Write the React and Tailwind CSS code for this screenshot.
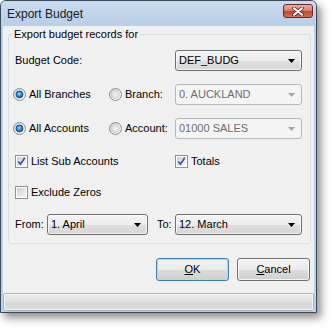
import React from "react";

function Radio({ checked, id }) {
  return (
    <svg width="13" height="13" viewBox="0 0 13 13" className="shrink-0">
      <defs>
        <linearGradient id={`ro${id}`} x1="0" y1="0" x2="1" y2="1">
          <stop offset="0" stopColor="#c9c9c9" />
          <stop offset="1" stopColor="#ffffff" />
        </linearGradient>
        <radialGradient id={`ri${id}`} cx="0.5" cy="0.5" r="0.55">
          <stop offset="0" stopColor="#f7f7f7" />
          <stop offset="1" stopColor="#cdcdcd" />
        </radialGradient>
        <radialGradient id={`rd${id}`} cx="0.45" cy="0.4" r="0.6">
          <stop offset="0" stopColor="#8fe0ff" />
          <stop offset="0.55" stopColor="#2d8fd6" />
          <stop offset="1" stopColor="#0e4c86" />
        </radialGradient>
      </defs>
      <circle cx="6.5" cy="6.5" r="6" fill={`url(#ro${id})`} stroke="#8b8f92" strokeWidth="1" />
      {checked ? (
        <circle cx="6.5" cy="6.5" r="3.4" fill={`url(#rd${id})`} stroke="#1b4a78" strokeWidth="0.9" />
      ) : (
        <circle cx="6.5" cy="6.5" r="4.3" fill={`url(#ri${id})`} />
      )}
    </svg>
  );
}

function Check({ checked, id }) {
  return (
    <svg width="13" height="13" viewBox="0 0 13 13" className="shrink-0">
      <defs>
        <linearGradient id={`cb${id}`} x1="0" y1="0" x2="1" y2="1">
          <stop offset="0" stopColor="#cfcfcf" />
          <stop offset="1" stopColor="#f7f7f7" />
        </linearGradient>
      </defs>
      <rect x="0.5" y="0.5" width="12" height="12" fill="#ffffff" stroke="#8e8f8f" />
      <rect x="2" y="2" width="9" height="9" fill={`url(#cb${id})`} />
      {checked && (
        <path d="M3.2 6.4 L5.4 9.3 L9.8 2.8" fill="none" stroke="#3b5aa0" strokeWidth="1.7" strokeLinejoin="round" />
      )}
    </svg>
  );
}

function Combo({ text, w, disabled }) {
  return (
    <div
      className={`h-[21px] ${w} shrink-0 rounded-[3px] border flex items-center pl-[3px] pr-[6px] ${
        disabled
          ? "border-[#b5b8ba] bg-[#f4f4f4] text-[#6d6d6d]"
          : "border-[#707070] bg-[linear-gradient(#f4f4f4_0%,#ececec_50%,#e0e0e0_51%,#d5d5d5_100%)] text-black shadow-[inset_0_0_0_1px_rgba(255,255,255,0.7)]"
      }`}
    >
      <span className="flex-1 whitespace-nowrap overflow-hidden">{text}</span>
      <svg width="7" height="4" viewBox="0 0 7 4">
        <path d="M0 0H7L3.5 4Z" fill={disabled ? "#a6a6a6" : "#000000"} />
      </svg>
    </div>
  );
}

function Button({ children, def }) {
  return (
    <div
      className={`w-[73px] h-[23px] rounded-[3px] border flex items-center justify-center text-black bg-[linear-gradient(#f2f2f2_0%,#ebebeb_50%,#dddddd_51%,#cfcfcf_100%)] ${
        def
          ? "border-[#3c7fb1] shadow-[inset_0_0_0_1px_#a9dcf6]"
          : "border-[#707070] shadow-[inset_0_0_0_1px_rgba(255,255,255,0.75)]"
      }`}
    >
      {children}
    </div>
  );
}

export default function App() {
  return (
    <div className="w-[333px] h-[328px] bg-white font-['Liberation_Sans',Arial,sans-serif] text-[11px] leading-[13px] text-black">
      <div className="w-[317px] h-[313px] flex flex-col rounded-t-[6px] border border-[#3b4a5a] bg-[#bad0e8] shadow-[4px_5px_9px_rgba(0,0,0,0.45)]">
        {/* title bar */}
        <div className="h-[25px] shrink-0 flex items-start rounded-t-[5px] bg-[linear-gradient(#c9dbef,#b9cee7)]">
          <div className="flex-1 pl-[6px] pt-[6px] text-[12px] leading-[14px] text-[#1a1a1a]">Export Budget</div>
          <div className="mt-[3px] mr-[3px] w-[30px] h-[14px] rounded-[3px] border border-[#6b2b22] flex items-center justify-center bg-[linear-gradient(#eab0a4_0%,#d9826f_45%,#c2432f_55%,#d2705b_100%)]">
            <svg width="12" height="9" viewBox="0 0 12 9">
              <path d="M2 1.2 L10 7.8 M10 1.2 L2 7.8" stroke="#4a2a26" strokeWidth="3.6" strokeLinecap="round" />
              <path d="M2 1.2 L10 7.8 M10 1.2 L2 7.8" stroke="#ffffff" strokeWidth="2" strokeLinecap="round" />
            </svg>
          </div>
        </div>
        {/* client */}
        <div className="flex-1 mx-[2px] mb-[1px] bg-[#f0f0f0] flex flex-col">
          <div className="relative mt-[8px] ml-[5px] mr-[3px] h-[210px] rounded-[3px] border border-[#d5dfe5] pl-[4px] pt-[15px] flex flex-col">
            <span className="absolute top-[-7px] left-[4px] px-[1px] bg-[#f0f0f0]">Export budget records for</span>
            <div className="h-[21px] flex items-center">
              <span className="w-[162px] pl-[2px]">Budget Code:</span>
              <Combo text="DEF_BUDG" w="w-[127px]" />
            </div>
            <div className="h-[21px] mt-[13px] flex items-center">
              <div className="w-[96px] flex items-center gap-[3px]">
                <Radio checked id="a" />
                <span>All Branches</span>
              </div>
              <div className="w-[66px] flex items-center gap-[3px]">
                <Radio id="b" />
                <span>Branch:</span>
              </div>
              <Combo text="0. AUCKLAND" w="w-[127px]" disabled />
            </div>
            <div className="h-[21px] mt-[13px] flex items-center">
              <div className="w-[96px] flex items-center gap-[3px]">
                <Radio checked id="c" />
                <span>All Accounts</span>
              </div>
              <div className="w-[66px] flex items-center gap-[3px]">
                <Radio id="d" />
                <span>Account:</span>
              </div>
              <Combo text="01000 SALES" w="w-[127px]" disabled />
            </div>
            <div className="h-[21px] mt-[12px] flex items-center">
              <div className="w-[162px] pl-[2px] flex items-center gap-[3px]">
                <Check checked id="e" />
                <span>List Sub Accounts</span>
              </div>
              <div className="flex items-center gap-[3px]">
                <Check checked id="f" />
                <span>Totals</span>
              </div>
            </div>
            <div className="h-[21px] mt-[10px] flex items-center">
              <div className="pl-[2px] flex items-center gap-[3px]">
                <Check id="g" />
                <span>Exclude Zeros</span>
              </div>
            </div>
            <div className="h-[21px] mt-[11px] flex items-center">
              <span className="w-[34px] pl-[2px]">From:</span>
              <Combo text="1. April" w="w-[101px]" />
              <span className="w-[27px] pl-[9px]">To:</span>
              <Combo text="12. March" w="w-[127px]" />
            </div>
          </div>
          <div className="mt-[14px] mr-[4px] flex justify-end gap-[8px]">
            <Button def>
              <span><u className="underline-offset-[1px]">O</u>K</span>
            </Button>
            <Button>
              <span><u className="underline-offset-[1px]">C</u>ancel</span>
            </Button>
          </div>
          <div className="mt-[12px] flex-1 rounded-[2px] border border-[#b2b2b2] bg-[linear-gradient(#ececec_0%,#e2e2e2_45%,#d6d6d6_55%,#dedede_100%)] shadow-[inset_0_0_0_1px_rgba(255,255,255,0.6)]"></div>
        </div>
      </div>
    </div>
  );
}
